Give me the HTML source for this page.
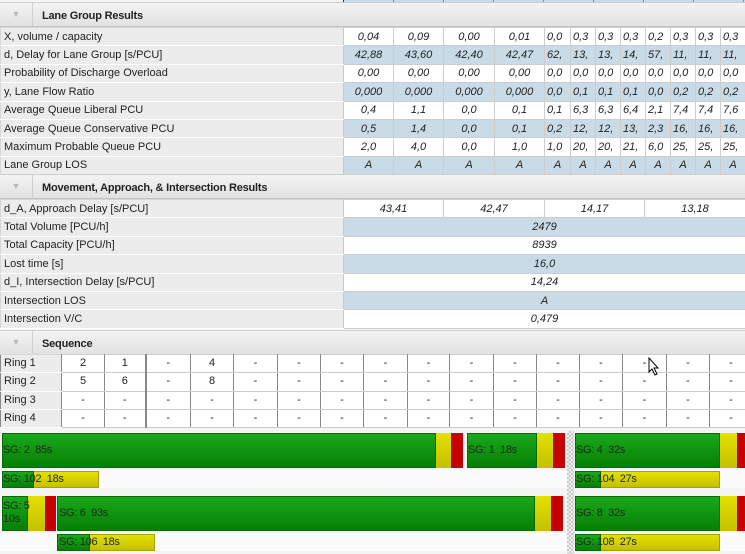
<!DOCTYPE html>
<html><head><meta charset="utf-8"><style>
*{box-sizing:border-box;margin:0;padding:0}
body{width:745px;height:554px;overflow:hidden;background:#f5f5f5;font-family:"Liberation Sans",sans-serif;font-size:11px;color:#222;position:relative}
.a{position:absolute}
.hdr{position:absolute;left:0;width:745px;height:25px;background:linear-gradient(#f3f3f3,#e2e2e2);border-top:1px solid #cfcfcf;border-bottom:1px solid #c4c4c4}
.hdr .tri{position:absolute;left:0;top:0;width:33px;height:23px;border-right:1px solid #cfcfcf;color:#b8b8b8;font-size:9px;text-align:center;line-height:22px}
.hdr b{position:absolute;left:42px;top:7px;font-size:11px;letter-spacing:-0.2px}
table{position:absolute;left:0;border-collapse:collapse;table-layout:fixed}
td{border:1px solid #cdcdcd;padding:0;white-space:nowrap;overflow:hidden;font-style:italic;text-align:center;height:18.4px;line-height:16px}
td.l{font-style:normal;text-align:left;padding-left:3px;background:#ececec;border-color:#d6d6d6 #c8c8c8 #fff #d6d6d6}
tr.w td{background:#fff}tr.b td{background:#c9dbe7}
tr.w td.l,tr.b td.l{background:#ececec}
td.k{border-left:1px solid #333}
td.s{text-align:left;padding-left:2px}
.bar{position:absolute;background:linear-gradient(#1ba81b,#058005);border:1px solid #0a6a0a}
.y{position:absolute;background:linear-gradient(#e4e000,#c4c000)}
.r{position:absolute;background:#c40000}
.t{position:absolute;font-size:11px;color:#1a2a1a;letter-spacing:-0.3px}
.seq td{font-style:normal;height:18.3px;line-height:17px;font-size:11px;border-left-color:#888;border-right-color:#888}
</style></head><body>
<!-- top strip -->
<div class="a" style="left:343px;top:0;width:402px;height:3px;background:repeating-linear-gradient(90deg,#c9dbe7 0 49px,#888 49px 50px);border-left:1px solid #333"></div>

<div class="hdr" style="top:2px"><div class="tri">▼</div><b>Lane Group Results</b></div>

<table style="top:27px;width:745px">
<colgroup><col style="width:343px"><col style="width:50px"><col style="width:50px"><col style="width:51px"><col style="width:50px"><col style="width:26px"><col style="width:25px"><col style="width:25px"><col style="width:25px"><col style="width:25px"><col style="width:25px"><col style="width:25px"><col style="width:25px"></colgroup>
<tr class="w"><td class="l">X, volume / capacity</td><td class="k">0,04</td><td>0,09</td><td class="k">0,00</td><td>0,01</td><td class="k s">0,0</td><td class="s">0,3</td><td class="s">0,3</td><td class="s">0,3</td><td class="k s">0,2</td><td class="s">0,3</td><td class="s">0,3</td><td class="s">0,3</td></tr>
<tr class="b"><td class="l">d, Delay for Lane Group [s/PCU]</td><td class="k">42,88</td><td>43,60</td><td class="k">42,40</td><td>42,47</td><td class="k s">62,</td><td class="s">13,</td><td class="s">13,</td><td class="s">14,</td><td class="k s">57,</td><td class="s">11,</td><td class="s">11,</td><td class="s">11,</td></tr>
<tr class="w"><td class="l">Probability of Discharge Overload</td><td class="k">0,00</td><td>0,00</td><td class="k">0,00</td><td>0,00</td><td class="k s">0,0</td><td class="s">0,0</td><td class="s">0,0</td><td class="s">0,0</td><td class="k s">0,0</td><td class="s">0,0</td><td class="s">0,0</td><td class="s">0,0</td></tr>
<tr class="b"><td class="l">y, Lane Flow Ratio</td><td class="k">0,000</td><td>0,000</td><td class="k">0,000</td><td>0,000</td><td class="k s">0,0</td><td class="s">0,1</td><td class="s">0,1</td><td class="s">0,1</td><td class="k s">0,0</td><td class="s">0,2</td><td class="s">0,2</td><td class="s">0,2</td></tr>
<tr class="w"><td class="l">Average Queue Liberal PCU</td><td class="k">0,4</td><td>1,1</td><td class="k">0,0</td><td>0,1</td><td class="k s">0,1</td><td class="s">6,3</td><td class="s">6,3</td><td class="s">6,4</td><td class="k s">2,1</td><td class="s">7,4</td><td class="s">7,4</td><td class="s">7,6</td></tr>
<tr class="b"><td class="l">Average Queue Conservative PCU</td><td class="k">0,5</td><td>1,4</td><td class="k">0,0</td><td>0,1</td><td class="k s">0,2</td><td class="s">12,</td><td class="s">12,</td><td class="s">13,</td><td class="k s">2,3</td><td class="s">16,</td><td class="s">16,</td><td class="s">16,</td></tr>
<tr class="w"><td class="l">Maximum Probable Queue PCU</td><td class="k">2,0</td><td>4,0</td><td class="k">0,0</td><td>1,0</td><td class="k s">1,0</td><td class="s">20,</td><td class="s">20,</td><td class="s">21,</td><td class="k s">6,0</td><td class="s">25,</td><td class="s">25,</td><td class="s">25,</td></tr>
<tr class="b"><td class="l">Lane Group LOS</td><td class="k">A</td><td>A</td><td class="k">A</td><td>A</td><td class="k">A</td><td>A</td><td>A</td><td>A</td><td class="k">A</td><td>A</td><td>A</td><td>A</td></tr>
</table>

<div class="hdr" style="top:174px"><div class="tri">▼</div><b>Movement, Approach, &amp; Intersection Results</b></div>

<table style="top:199px;width:745px">
<colgroup><col style="width:343px"><col style="width:100px"><col style="width:101px"><col style="width:100px"><col style="width:101px"></colgroup>
<tr class="w"><td class="l">d_A, Approach Delay [s/PCU]</td><td class="k">43,41</td><td class="k">42,47</td><td class="k">14,17</td><td class="k">13,18</td></tr>
<tr class="b"><td class="l">Total Volume [PCU/h]</td><td class="k" colspan="4">2479</td></tr>
<tr class="w"><td class="l">Total Capacity [PCU/h]</td><td class="k" colspan="4">8939</td></tr>
<tr class="b"><td class="l">Lost time [s]</td><td class="k" colspan="4">16,0</td></tr>
<tr class="w"><td class="l">d_I, Intersection Delay [s/PCU]</td><td class="k" colspan="4">14,24</td></tr>
<tr class="b"><td class="l">Intersection LOS</td><td class="k" colspan="4">A</td></tr>
<tr class="w"><td class="l">Intersection V/C</td><td class="k" colspan="4">0,479</td></tr>
</table>

<div class="hdr" style="top:330px"><div class="tri">▼</div><b>Sequence</b></div>

<table class="seq" style="top:354px;width:752px">
<colgroup><col style="width:61px"><col style="width:43px"><col style="width:41px"><col style="width:45px"><col style="width:43px"><col style="width:44px"><col style="width:43px"><col style="width:43px"><col style="width:44px"><col style="width:42px"><col style="width:44px"><col style="width:43px"><col style="width:43px"><col style="width:43px"><col style="width:44px"><col style="width:43px"><col style="width:43px"></colgroup>
<tr class="w"><td class="l">Ring 1</td><td>2</td><td>1</td><td style="border-left:2px solid #888">-</td><td>4</td><td>-</td><td>-</td><td>-</td><td>-</td><td>-</td><td>-</td><td>-</td><td>-</td><td>-</td><td>-</td><td>-</td><td>-</td></tr>
<tr class="w"><td class="l">Ring 2</td><td>5</td><td>6</td><td style="border-left:2px solid #888">-</td><td>8</td><td>-</td><td>-</td><td>-</td><td>-</td><td>-</td><td>-</td><td>-</td><td>-</td><td>-</td><td>-</td><td>-</td><td>-</td></tr>
<tr class="w"><td class="l">Ring 3</td><td>-</td><td>-</td><td style="border-left:2px solid #888">-</td><td>-</td><td>-</td><td>-</td><td>-</td><td>-</td><td>-</td><td>-</td><td>-</td><td>-</td><td>-</td><td>-</td><td>-</td><td>-</td></tr>
<tr class="w"><td class="l">Ring 4</td><td>-</td><td>-</td><td style="border-left:2px solid #888">-</td><td>-</td><td>-</td><td>-</td><td>-</td><td>-</td><td>-</td><td>-</td><td>-</td><td>-</td><td>-</td><td>-</td><td>-</td><td>-</td></tr>
</table>

<!-- bar area -->
<div class="a" style="left:0;top:428px;width:745px;height:126px;background:#f4f4f4"></div>
<div class="a" style="left:0;top:470px;width:745px;height:18px;background:#fbfbfb"></div>
<div class="a" style="left:0;top:533px;width:745px;height:18px;background:#fbfbfb"></div>
<div class="a" style="left:567px;top:431px;width:7px;height:123px;background:repeating-conic-gradient(#c8c8c8 0 25%,#f0f0f0 0 50%) 0 0/4px 4px"></div>

<!-- row 1 -->
<div class="bar" style="left:2px;top:433px;width:434px;height:35px"></div>
<div class="y" style="left:436px;top:433px;width:15px;height:35px"></div>
<div class="r" style="left:451px;top:433px;width:12px;height:35px"></div>
<div class="t" style="left:3px;top:444px">SG: 2&nbsp; 85s</div>
<div class="bar" style="left:467px;top:433px;width:70px;height:35px"></div>
<div class="y" style="left:537px;top:433px;width:16px;height:35px"></div>
<div class="r" style="left:553px;top:433px;width:12px;height:35px"></div>
<div class="t" style="left:468px;top:444px">SG: 1&nbsp; 18s</div>
<div class="bar" style="left:575px;top:433px;width:145px;height:35px"></div>
<div class="y" style="left:720px;top:433px;width:17px;height:35px"></div>
<div class="r" style="left:737px;top:433px;width:8px;height:35px"></div>
<div class="t" style="left:576px;top:444px">SG: 4&nbsp; 32s</div>
<!-- row 2 -->
<div class="y" style="left:2px;top:471px;width:97px;height:17px;border:1px solid #aaa000"></div>
<div class="bar" style="left:2px;top:471px;width:32px;height:17px"></div>
<div class="t" style="left:3px;top:473px">SG: 102&nbsp; 18s</div>
<div class="y" style="left:575px;top:471px;width:145px;height:17px;border:1px solid #aaa000"></div>
<div class="bar" style="left:575px;top:471px;width:26px;height:17px"></div>
<div class="t" style="left:576px;top:473px">SG: 104&nbsp; 27s</div>
<!-- row 3 -->
<div class="bar" style="left:2px;top:496px;width:26px;height:35px"></div>
<div class="y" style="left:28px;top:496px;width:17px;height:35px"></div>
<div class="r" style="left:45px;top:496px;width:11px;height:35px"></div>
<div class="t" style="left:3px;top:500px;line-height:13px">SG: 5<br>10s</div>
<div class="bar" style="left:57px;top:496px;width:478px;height:35px"></div>
<div class="y" style="left:535px;top:496px;width:16px;height:35px"></div>
<div class="r" style="left:551px;top:496px;width:12px;height:35px"></div>
<div class="t" style="left:59px;top:507px">SG: 6&nbsp; 93s</div>
<div class="bar" style="left:575px;top:496px;width:145px;height:35px"></div>
<div class="y" style="left:720px;top:496px;width:17px;height:35px"></div>
<div class="r" style="left:737px;top:496px;width:8px;height:35px"></div>
<div class="t" style="left:576px;top:507px">SG: 8&nbsp; 32s</div>
<!-- row 4 -->
<div class="y" style="left:57px;top:534px;width:98px;height:17px;border:1px solid #aaa000"></div>
<div class="bar" style="left:57px;top:534px;width:33px;height:17px"></div>
<div class="t" style="left:59px;top:536px">SG: 106&nbsp; 18s</div>
<div class="y" style="left:575px;top:534px;width:145px;height:17px;border:1px solid #aaa000"></div>
<div class="bar" style="left:575px;top:534px;width:26px;height:17px"></div>
<div class="t" style="left:576px;top:536px">SG: 108&nbsp; 27s</div>

<!-- cursor -->
<svg class="a" style="left:648px;top:357px" width="12" height="20" viewBox="0 0 12 20"><path d="M1 1 L1 15 L4 12 L7 18 L9 17 L6 11 L10 11 Z" fill="#fff" stroke="#000" stroke-width="1"/></svg>
</body></html>
